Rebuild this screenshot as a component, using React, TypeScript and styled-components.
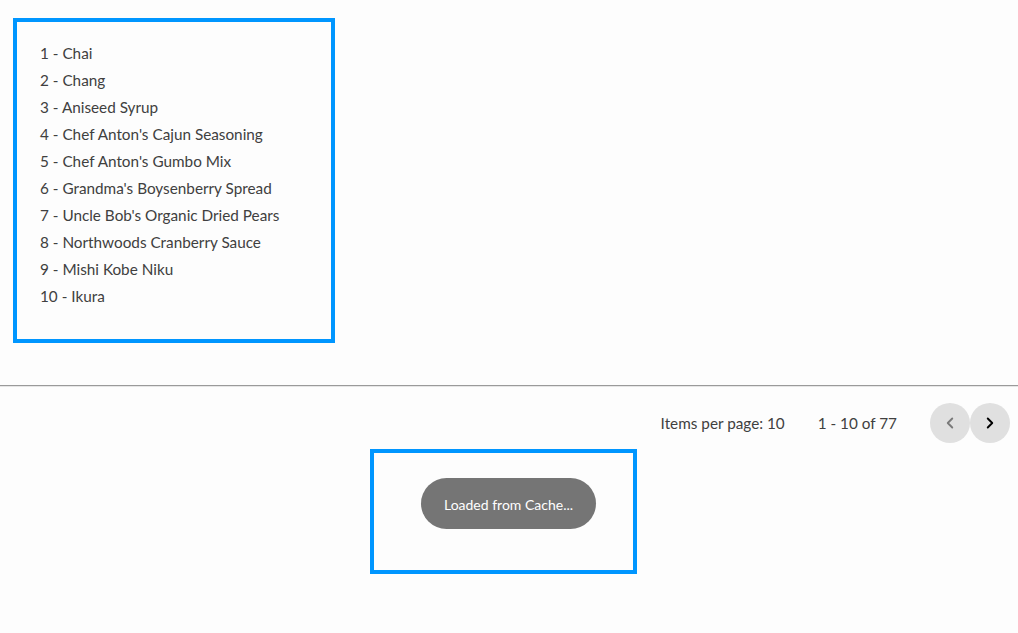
import React from 'react';
import styled, { createGlobalStyle } from 'styled-components';
import { ChevronLeft, ChevronRight } from 'lucide-react';

const GlobalStyle = createGlobalStyle`
  html, body {
    margin: 0;
    padding: 0;
    background: #fdfdfd;
    font-family: Lato, "Open Sans", sans-serif;
    color: #404040;
  }
`;

const Page = styled.div`
  display: flex;
  flex-direction: column;
  padding-top: 18px;
`;

const ListBox = styled.div`
  width: 322px;
  height: 325px;
  box-sizing: border-box;
  margin-left: 13px;
  border: 4px solid #0096ff;
  padding: 18px 0 0 23px;
`;

const ProductList = styled.ul`
  list-style: none;
  margin: 0;
  padding: 0;
`;

const ProductItem = styled.li`
  height: 27px;
  line-height: 27px;
  font-size: 15.3px;
  color: #404040;
`;

const Divider = styled.hr`
  margin: 42px 0 0;
  border: none;
  border-top: 1px solid #9a9a9a;
  border-bottom: 1px solid #e6e6e6;
  height: 0;
`;

const Pager = styled.div`
  display: flex;
  justify-content: flex-end;
  align-items: center;
  gap: 33px;
  padding: 16px 8px 0 0;
  font-size: 15.3px;
  color: #404040;
`;

const PagerButtons = styled.div`
  display: flex;
`;

const PageButton = styled.button<{ $disabled?: boolean }>`
  width: 40px;
  height: 40px;
  border-radius: 50%;
  border: none;
  padding: 0;
  background: #e0e0e0;
  color: ${p => (p.$disabled ? '#7a7a7a' : '#000')};
  display: flex;
  align-items: center;
  justify-content: center;
  cursor: ${p => (p.$disabled ? 'default' : 'pointer')};
`;

const ToastBox = styled.div`
  align-self: flex-start;
  margin: 6px 0 0 370px;
  width: 267px;
  height: 125px;
  box-sizing: border-box;
  border: 4px solid #0096ff;
  padding: 25px 0 0 47px;
`;

const Toast = styled.div`
  width: 175px;
  height: 51px;
  border-radius: 26px;
  background: #757575;
  color: #fff;
  font-size: 14px;
  padding-top: 1px;
  box-sizing: border-box;
  display: flex;
  align-items: center;
  justify-content: center;
`;

const products = [
  'Chai',
  'Chang',
  'Aniseed Syrup',
  "Chef Anton's Cajun Seasoning",
  "Chef Anton's Gumbo Mix",
  "Grandma's Boysenberry Spread",
  "Uncle Bob's Organic Dried Pears",
  'Northwoods Cranberry Sauce',
  'Mishi Kobe Niku',
  'Ikura'
];

export default function App() {
  return (
    <>
      <GlobalStyle />
      <Page>
        <ListBox>
          <ProductList>
            {products.map((name, i) => (
              <ProductItem key={name}>{i + 1} - {name}</ProductItem>
            ))}
          </ProductList>
        </ListBox>
        <Divider />
        <Pager>
          <span>Items per page: 10</span>
          <span>1 - 10 of 77</span>
          <PagerButtons>
            <PageButton $disabled aria-label="Previous page">
              <ChevronLeft size={18} strokeWidth={2.5} />
            </PageButton>
            <PageButton aria-label="Next page">
              <ChevronRight size={18} strokeWidth={2.5} />
            </PageButton>
          </PagerButtons>
        </Pager>
        <ToastBox>
          <Toast>Loaded from Cache...</Toast>
        </ToastBox>
      </Page>
    </>
  );
}
